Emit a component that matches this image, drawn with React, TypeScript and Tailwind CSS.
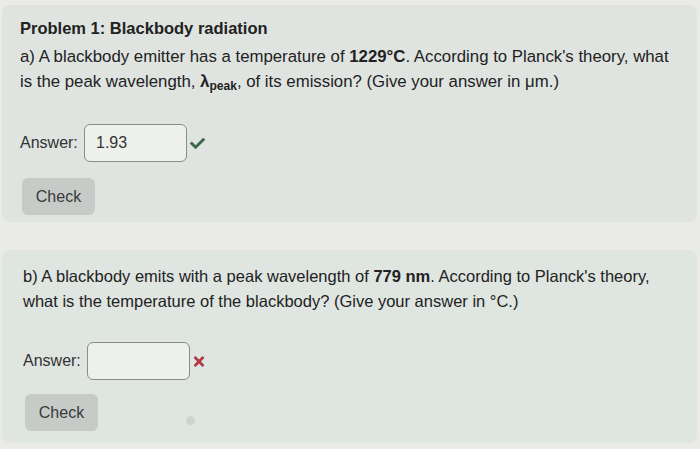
import React from 'react';

const font = { fontFamily: '"Liberation Sans", Arial, sans-serif' };

const CheckIcon = () => (
  <svg viewBox="0 0 512 512" className="w-[15px] h-[15px] fill-[#3d6a4c]">
    <path d="M173.9 439.4l-166.4-166.4c-10-10-10-26.2 0-36.2l36.2-36.2c10-10 26.2-10 36.2 0L192 312.7 432.1 72.6c10-10 26.2-10 36.2 0l36.2 36.2c10 10 10 26.2 0 36.2l-294.4 294.4c-10 10-26.2 10-36.2 0z" />
  </svg>
);

const CrossIcon = () => (
  <svg viewBox="0 0 352 512" className="w-[12px] h-[15px] fill-[#b23a45]">
    <path d="M242.7 256l100.1-100.1c12.3-12.3 12.3-32.2 0-44.5l-22.2-22.2c-12.3-12.3-32.2-12.3-44.5 0L176 189.3 75.9 89.2c-12.3-12.3-32.2-12.3-44.5 0L9.2 111.5c-12.3 12.3-12.3 32.2 0 44.5L109.3 256 9.2 356.1c-12.3 12.3-12.3 32.2 0 44.5l22.2 22.2c12.3 12.3 32.2 12.3 44.5 0L176 322.7l100.1 100.1c12.3 12.3 32.2 12.3 44.5 0l22.2-22.2c12.3-12.3 12.3-32.2 0-44.5L242.7 256z" />
  </svg>
);

interface AnswerRowProps {
  value: string;
  correct: boolean;
}

const AnswerRow: React.FC<AnswerRowProps> = ({ value, correct }) => (
  <div className="flex items-center h-[38px]">
    <span className="text-[16px] text-[#333] w-[64px]">Answer:</span>
    <div className="w-[103px] h-[38px] rounded-[6px] border border-[#8a8d8a] bg-[#eef0ec] flex items-center px-[11px] text-[16px] text-[#333]">
      {value}
    </div>
    <span className="ml-[3px]">{correct ? <CheckIcon /> : <CrossIcon />}</span>
  </div>
);

const CheckButton = () => (
  <button className="w-[73px] h-[37px] rounded-[6px] bg-[#c6cbc8] text-[16px] text-[#3a3a3a]">
    Check
  </button>
);

export default function App() {
  return (
    <div className="w-[700px] h-[449px] bg-[#eaebe6] pt-[5px] overflow-hidden text-[#222]" style={font}>
      <div className="ml-[2px] mr-[3px] h-[217px] rounded-[8px] bg-[#dfe4e0] pl-[18px] pt-[11px]">
        <h1 className="text-[16.5px] leading-[24px] font-bold">Problem 1: Blackbody radiation</h1>
        <p className="mt-[4px] text-[16.8px] leading-[25px] pr-[20px]">
          a) A blackbody emitter has a temperature of <b>1229°C</b>. According to Planck's theory, what is the peak wavelength,{' '}
          <b className="text-[17px]">
            λ<sub className="text-[12px]">peak</sub>
          </b>
          , of its emission? (Give your answer in μm.)
        </p>
        <div className="mt-[30px]">
          <AnswerRow value="1.93" correct />
        </div>
        <div className="mt-[16px] pl-[2px]">
          <CheckButton />
        </div>
      </div>
      <div className="mt-[28px] ml-[2px] mr-[3px] h-[193px] rounded-[8px] bg-[#dfe5e1] pl-[21px] pt-[14px]">
        <p className="text-[16.5px] leading-[25px] pr-[30px]">
          b) A blackbody emits with a peak wavelength of <b>779 nm</b>. According to Planck's theory, what is the temperature of the blackbody? (Give your answer in °C.)
        </p>
        <div className="mt-[28px]">
          <AnswerRow value="" correct={false} />
        </div>
        <div className="mt-[14px] pl-[2px] flex items-end">
          <CheckButton />
          <span className="ml-[88px] mb-[6px] w-[9px] h-[9px] rounded-full bg-[#cfd4d1]" />
        </div>
      </div>
    </div>
  );
}
